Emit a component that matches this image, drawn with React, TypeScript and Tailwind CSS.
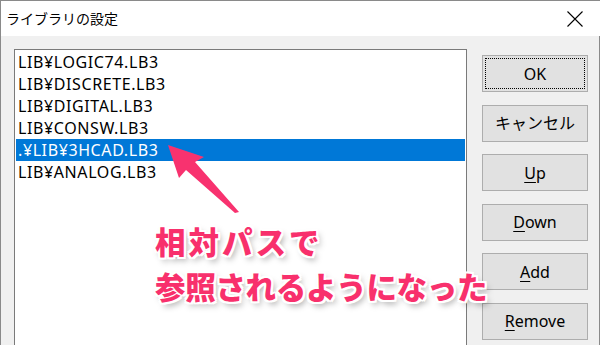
const items = [
  "LIB¥LOGIC74.LB3",
  "LIB¥DISCRETE.LB3",
  "LIB¥DIGITAL.LB3",
  "LIB¥CONSW.LB3",
  ".¥LIB¥3HCAD.LB3",
  "LIB¥ANALOG.LB3",
];

const uiFont = "font-['Noto_Sans','Noto_Sans_CJK_JP',sans-serif]";

const Btn = ({ label, mnemonic, focused }: { label: string; mnemonic?: boolean; focused?: boolean }) => (
  <div className="relative h-[37px] w-[106px] border border-[#adadad] bg-[#e1e1e1] flex items-center justify-center text-[16px] text-black">
    {focused && <div className="absolute inset-[2px] border border-dotted border-black"></div>}
    {mnemonic ? (
      <span>
        <span className="underline underline-offset-[3px]">{label[0]}</span>
        {label.slice(1)}
      </span>
    ) : (
      <span>{label}</span>
    )}
  </div>
);

export default function App() {
  return (
    <div className={`relative w-[600px] h-[345px] overflow-hidden bg-white flex flex-col ${uiFont}`}>
      {/* title bar */}
      <div className="h-[36px] shrink-0 flex items-center justify-between border-t border-l border-[#8a8a8a] pl-[5px] pr-[17px]">
        <span className="text-[14px] text-black font-['Noto_Sans_CJK_JP',sans-serif]">ライブラリの設定</span>
        <svg width="16" height="16" viewBox="0 0 16 16">
          <path d="M0.5 0.5 L15.5 15.5 M15.5 0.5 L0.5 15.5" stroke="#000" strokeWidth="1.1" fill="none" />
        </svg>
      </div>

      {/* body */}
      <div className="flex-1 flex bg-[#f0f0f0] border-l border-r border-[#8a8a8a] pl-[13px] pt-[13px]">
        <div className="w-[453px] h-[320px] border border-[#7a7a7a] bg-white pt-[1px] px-[1px] shrink-0">
          {items.map((it, i) => (
            <div
              key={it}
              className={`h-[22px] pl-[2px] flex items-center text-[16px] tracking-[0.6px] ${
                i === 4 ? "bg-[#0078d7] text-white" : "text-black"
              }`}
            >
              {it}
            </div>
          ))}
        </div>

        <div className="ml-[15px] mt-[6px] flex flex-col gap-[12.6px]">
          <Btn label="OK" focused />
          <Btn label="キャンセル" />
          <Btn label="Up" mnemonic />
          <Btn label="Down" mnemonic />
          <Btn label="Add" mnemonic />
          <Btn label="Remove" mnemonic />
        </div>
      </div>

      {/* arrow */}
      <svg className="absolute left-0 top-0" width="600" height="345" viewBox="0 0 600 345">
        <polygon
          points="168,145 204,157 195,162 239,212 235,213 186,170 179,178"
          fill="#f8326f"
        />
      </svg>

      {/* callout */}
      <div className="absolute left-[155px] top-[219px] text-[30.5px] leading-[45px] font-black text-[#f8306c] font-['Noto_Sans_CJK_JP',sans-serif] [text-shadow:2px_0_0_#fff,-2px_0_0_#fff,0_2px_0_#fff,0_-2px_0_#fff,2px_2px_0_#fff,-2px_-2px_0_#fff,2px_-2px_0_#fff,-2px_2px_0_#fff,3px_4px_6px_rgba(0,0,0,0.35)]">
        <div className="tracking-[3px]">相対パスで</div>
        <div className="tracking-[-0.3px]">参照されるようになった</div>
      </div>
    </div>
  );
}
